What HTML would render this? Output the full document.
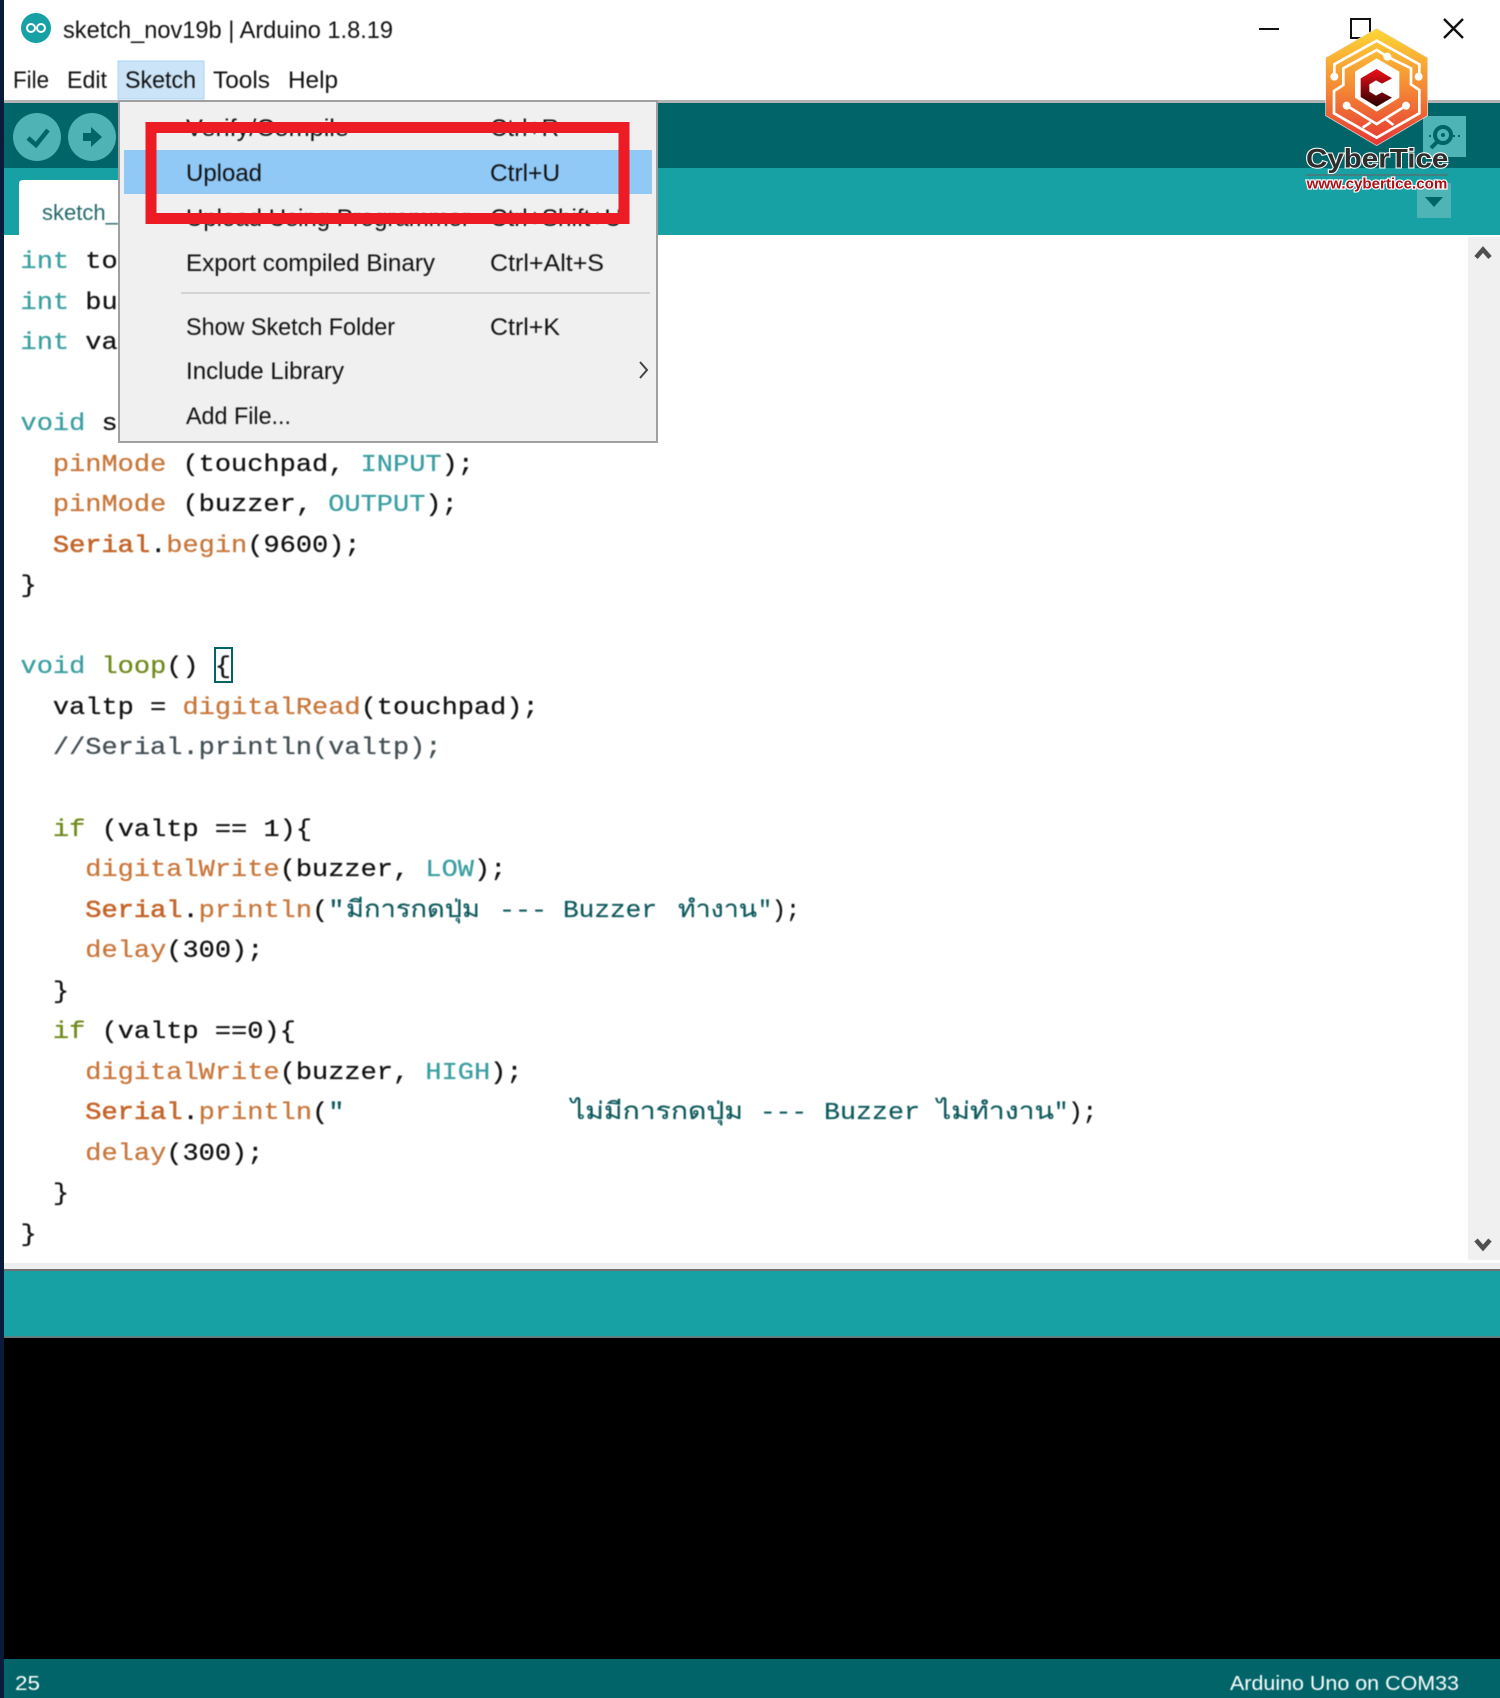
<!DOCTYPE html>
<html lang="en">
<head>
<meta charset="utf-8">
<title>sketch_nov19b | Arduino 1.8.19</title>
<style>
html,body{margin:0;padding:0;background:#fff;width:1500px;height:1698px;overflow:hidden}
svg{display:block}
text{white-space:pre}
.ui{font-family:"Liberation Sans",sans-serif;font-size:24px;fill:#111;filter:blur(.4px)}
.code{font-family:"Liberation Mono","Noto Sans CJK SC",monospace;font-size:24px;fill:#111;stroke:#111;stroke-width:.25px;filter:blur(.4px)}
.thai{font-family:"Liberation Mono","DejaVu Sans",sans-serif;font-size:24px;fill:#0f5a5d;stroke:#0f5a5d;stroke-width:.2px;filter:blur(.4px)}
.o{fill:#c9763a;stroke:#c9763a}
.t{fill:#3a9ea0;stroke:#3a9ea0}
.l{fill:#6f8a1a;stroke:#6f8a1a}
.s{fill:#0f5a5d;stroke:#0f5a5d}
.c{fill:#434f54;stroke:#434f54}
.b{fill:#c4652a;stroke:#c4652a;stroke-width:.6px}
</style>
</head>
<body>
<svg width="1500" height="1698" viewBox="0 0 1500 1698" xmlns="http://www.w3.org/2000/svg">
<defs>
<linearGradient id="hexg" x1="0" y1="0" x2="0" y2="1">
<stop offset="0" stop-color="#fdd835"/><stop offset=".5" stop-color="#f58a34"/><stop offset="1" stop-color="#e53535"/>
</linearGradient>
<linearGradient id="cg" x1="0" y1="0" x2="0" y2="1">
<stop offset="0" stop-color="#f0101a"/><stop offset="1" stop-color="#2a0000"/>
</linearGradient>
</defs>

<rect width="1500" height="1698" fill="#fff"/>

<!-- title bar -->
<circle cx="36" cy="28" r="15" fill="#17a1a5"/>
<g fill="none" stroke="#fff" stroke-width="2"><circle cx="31" cy="28" r="4"/><circle cx="41" cy="28" r="4"/></g>
<text class="ui" x="63" y="38" textLength="330" lengthAdjust="spacingAndGlyphs">sketch_nov19b | Arduino 1.8.19</text>
<rect x="1259" y="28" width="20" height="2" fill="#111"/>
<rect x="1351" y="19" width="19" height="19" fill="none" stroke="#111" stroke-width="2"/>
<path d="M1444 19L1463 38M1463 19L1444 38" stroke="#111" stroke-width="2.4" fill="none"/>

<!-- menu bar -->
<rect x="118" y="61" width="86" height="38" fill="#cce4f7" stroke="#a9d3f3" stroke-width="1"/>
<text class="ui" x="13" y="88" textLength="36" lengthAdjust="spacingAndGlyphs">File</text>
<text class="ui" x="67" y="88" textLength="40" lengthAdjust="spacingAndGlyphs">Edit</text>
<text class="ui" x="125" y="88" textLength="71" lengthAdjust="spacingAndGlyphs">Sketch</text>
<text class="ui" x="213" y="88" textLength="57" lengthAdjust="spacingAndGlyphs">Tools</text>
<text class="ui" x="288" y="88" textLength="50" lengthAdjust="spacingAndGlyphs">Help</text>
<rect x="0" y="100" width="1500" height="3" fill="#b4b4b4"/>

<!-- toolbar -->
<rect x="0" y="103" width="1500" height="65" fill="#006468"/>
<rect x="0" y="168" width="1500" height="67" fill="#17a1a5"/>
<circle cx="37" cy="137" r="24" fill="#4fb2b4"/>
<circle cx="92" cy="137" r="24" fill="#4fb2b4"/>
<path d="M28 138L36 145L48 130" fill="none" stroke="#006468" stroke-width="4.5"/>
<path d="M83 133h8v-6l11 10-11 10v-6h-8z" fill="#006468"/>
<rect x="1423" y="116" width="43" height="41" fill="#4fb4b6"/>
<circle cx="1443" cy="135" r="8" fill="none" stroke="#006468" stroke-width="4"/>
<circle cx="1443" cy="135" r="2" fill="#006468"/>
<path d="M1437 142L1431 148" stroke="#006468" stroke-width="4"/>
<path d="M1429 136h2M1434 136h1M1453 136h2M1458 136h2" stroke="#006468" stroke-width="2"/>
<rect x="1417" y="183" width="34" height="35" fill="#4fb4b6"/>
<path d="M1425 197h18l-9 10z" fill="#006468"/>

<!-- tab -->
<path d="M19 235V184q0-4 4-4H140V235z" fill="#fff"/>
<text class="ui" x="42" y="220" style="fill:#24696b;font-size:22px">sketch_nov19b</text>

<!-- editor -->
<rect x="0" y="235" width="1500" height="28" fill="#fff"/>
<rect x="1468" y="237" width="32" height="1023" fill="#f0f0f0"/>
<path d="M1476 257.500L1483 249.500L1490 257.500" fill="none" stroke="#505050" stroke-width="4.5"/>
<path d="M1476 1240L1483 1248L1490 1240" fill="none" stroke="#505050" stroke-width="4.5"/>

<rect x="215" y="648" width="17" height="34" fill="none" stroke="#006468" stroke-width="2"/>

<g transform="translate(20.5 -1) scale(1.125 1)">
<text class="code" y="269"><tspan class="t">int</tspan> touchpad = 2;</text>
<text class="code" y="310"><tspan class="t">int</tspan> buzzer = 3;</text>
<text class="code" y="350"><tspan class="t">int</tspan> valtp = 0;</text>
<text class="code" y="431"><tspan class="t">void</tspan> setup() {</text>
<text class="code" y="472">  <tspan class="o">pinMode</tspan> (touchpad, <tspan class="t">INPUT</tspan>);</text>
<text class="code" y="512">  <tspan class="o">pinMode</tspan> (buzzer, <tspan class="t">OUTPUT</tspan>);</text>
<text class="code" y="553">  <tspan class="b">Serial</tspan>.<tspan class="o">begin</tspan>(9600);</text>
<text class="code" y="593">}</text>
<text class="code" y="674"><tspan class="t">void</tspan> <tspan class="l">loop</tspan>() {</text>
<text class="code" y="715">  valtp = <tspan class="o">digitalRead</tspan>(touchpad);</text>
<text class="code" y="755"><tspan class="c">  //Serial.println(valtp);</tspan></text>
<text class="code" y="837">  <tspan class="l">if</tspan> (valtp == 1){</text>
<text class="code" y="877">    <tspan class="o">digitalWrite</tspan>(buzzer, <tspan class="t">LOW</tspan>);</text>
<text class="code" y="918">    <tspan class="b">Serial</tspan>.<tspan class="o">println</tspan>(<tspan class="s">"</tspan></text>
<text class="code" y="958">    <tspan class="o">delay</tspan>(300);</text>
<text class="code" y="999">  }</text>
<text class="code" y="1039">  <tspan class="l">if</tspan> (valtp ==0){</text>
<text class="code" y="1080">    <tspan class="o">digitalWrite</tspan>(buzzer, <tspan class="t">HIGH</tspan>);</text>
<text class="code" y="1120">    <tspan class="b">Serial</tspan>.<tspan class="o">println</tspan>(<tspan class="s">"</tspan></text>
<text class="code" y="1161">    <tspan class="o">delay</tspan>(300);</text>
<text class="code" y="1201">  }</text>
<text class="code" y="1242">}</text>
</g>

<!-- Thai strings -->
<text class="thai" x="346" y="917" textLength="134" lengthAdjust="spacingAndGlyphs">มีการกดปุ่ม</text>
<text class="thai" x="499" y="917" textLength="48" lengthAdjust="spacingAndGlyphs">---</text>
<text class="thai" x="563" y="917" textLength="94" lengthAdjust="spacingAndGlyphs">Buzzer</text>
<text class="thai" x="678" y="917" textLength="79" lengthAdjust="spacingAndGlyphs">ทำงาน</text>
<text class="code" x="758" y="917" textLength="42" lengthAdjust="spacingAndGlyphs"><tspan class="s">"</tspan>);</text>
<text class="thai" x="571" y="1119" textLength="172" lengthAdjust="spacingAndGlyphs">ไม่มีการกดปุ่ม</text>
<text class="thai" x="760" y="1119" textLength="47" lengthAdjust="spacingAndGlyphs">---</text>
<text class="thai" x="824" y="1119" textLength="96" lengthAdjust="spacingAndGlyphs">Buzzer</text>
<text class="thai" x="937" y="1119" textLength="117" lengthAdjust="spacingAndGlyphs">ไม่ทำงาน</text>
<text class="code" x="1054" y="1119" textLength="43" lengthAdjust="spacingAndGlyphs"><tspan class="s">"</tspan>);</text>

<!-- lower panels -->
<rect x="0" y="1263" width="1500" height="6" fill="#eeeeee"/>
<rect x="0" y="1269" width="1500" height="2" fill="#707070"/>
<rect x="0" y="1271" width="1500" height="65" fill="#17a1a5"/>
<rect x="0" y="1336" width="1500" height="2" fill="#5f7f80"/>
<rect x="0" y="1338" width="1500" height="321" fill="#000"/>
<rect x="0" y="1659" width="1500" height="39" fill="#006468"/>
<text class="ui" x="15" y="1690" textLength="25" lengthAdjust="spacingAndGlyphs" style="fill:#fff;font-size:20px">25</text>
<text class="ui" x="1230" y="1690" textLength="229" lengthAdjust="spacingAndGlyphs" style="fill:#fff;font-size:20px">Arduino Uno on COM33</text>

<!-- dropdown menu -->
<rect x="119" y="101" width="538" height="341" fill="#f0f0f0" stroke="#a0a0a0" stroke-width="2"/>
<rect x="124" y="150" width="528" height="44" fill="#90c8f6"/>
<text class="ui" x="186" y="136" textLength="163" lengthAdjust="spacingAndGlyphs">Verify/Compile</text>
<text class="ui" x="490" y="136" textLength="69" lengthAdjust="spacingAndGlyphs">Ctrl+R</text>
<text class="ui" x="186" y="181" textLength="76" lengthAdjust="spacingAndGlyphs">Upload</text>
<text class="ui" x="490" y="181" textLength="70" lengthAdjust="spacingAndGlyphs">Ctrl+U</text>
<text class="ui" x="186" y="226" textLength="284" lengthAdjust="spacingAndGlyphs">Upload Using Programmer</text>
<text class="ui" x="490" y="226" textLength="132" lengthAdjust="spacingAndGlyphs">Ctrl+Shift+U</text>
<text class="ui" x="186" y="271" textLength="249" lengthAdjust="spacingAndGlyphs">Export compiled Binary</text>
<text class="ui" x="490" y="271" textLength="114" lengthAdjust="spacingAndGlyphs">Ctrl+Alt+S</text>
<rect x="181" y="292" width="469" height="2" fill="#d4d4d4"/>
<text class="ui" x="186" y="335" textLength="209" lengthAdjust="spacingAndGlyphs">Show Sketch Folder</text>
<text class="ui" x="490" y="335" textLength="70" lengthAdjust="spacingAndGlyphs">Ctrl+K</text>
<text class="ui" x="186" y="379" textLength="158" lengthAdjust="spacingAndGlyphs">Include Library</text>
<path d="M640 362L647 370L640 378" fill="none" stroke="#444" stroke-width="2"/>
<text class="ui" x="186" y="424" textLength="105" lengthAdjust="spacingAndGlyphs">Add File...</text>

<!-- red highlight rectangle -->
<rect x="151" y="127.500" width="473" height="91" fill="none" stroke="#ed1c24" stroke-width="11"/>

<!-- logo -->
<g transform="translate(1310 25) scale(.33333)">
<polygon points="200,10 353,98 353,272 200,362 47,272 47,98" fill="url(#hexg)" stroke="#e8e8e8" stroke-width="2"/>
<g fill="none" stroke="#fff" stroke-width="8">
<path d="M73 155V118L200 47L328 118V155"/>
<path d="M232 95L200 75L100 130V180L72 198V265L200 338L328 265V195L303 178V130L232 95"/>
<path d="M110 242L200 297L288 242"/>
<path d="M158 308L182 292M228 283L250 300"/>
</g>
<g fill="#fff">
<circle cx="73" cy="155" r="12"/><circle cx="326" cy="155" r="12"/><circle cx="232" cy="95" r="12"/><circle cx="110" cy="242" r="12"/><circle cx="288" cy="242" r="12"/>
<polygon points="200,100 268,140 268,218 200,260 135,218 135,140"/>
</g>
<polygon points="200,132 246,160 216,176 198,166 178,178 178,200 198,212 216,202 246,218 200,245 152,216 152,160" fill="url(#cg)"/>
</g>
<g transform="translate(1200 0) scale(.33333)">
<text x="318" y="503" textLength="427" lengthAdjust="spacingAndGlyphs" style="font-family:'Liberation Sans',sans-serif;font-weight:bold;font-size:80px;fill:#2e2e2e;stroke:#fff;stroke-width:6px;paint-order:stroke">CyberTice</text>
<rect x="318" y="524" width="425" height="2" fill="#9c3a3a"/>
<text x="320" y="565" textLength="422" lengthAdjust="spacingAndGlyphs" style="font-family:'Liberation Sans',sans-serif;font-weight:bold;font-size:44px;fill:#b00d14;stroke:#fff;stroke-width:7px;paint-order:stroke">www.cybertice.com</text>
</g>

<!-- left strip -->
<rect x="0" y="0" width="4" height="1698" fill="#0a1a3a"/>
</svg>
</body>
</html>
